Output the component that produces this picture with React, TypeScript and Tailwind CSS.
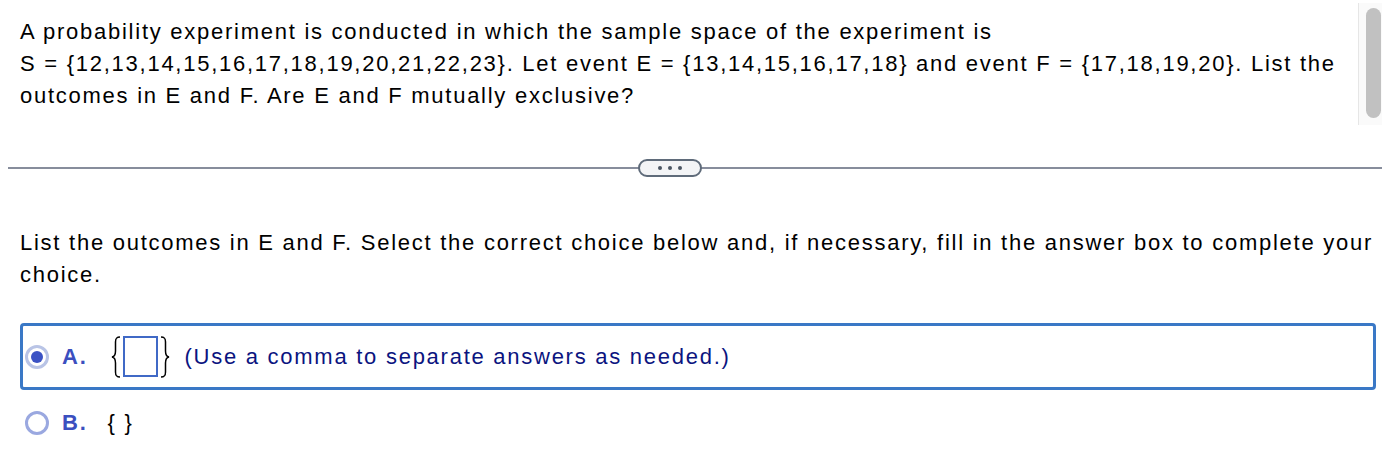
function Brace({ flip }: { flip?: boolean }) {
  return (
    <svg width="11" height="42" viewBox="0 0 11 42" className={flip ? "-scale-x-100" : ""}>
      <path
        d="M9 1 C5 1 4.5 3 4.5 6 L4.5 15 C4.5 19 3.5 20.5 1 21 C3.5 21.5 4.5 23 4.5 27 L4.5 36 C4.5 39 5 41 9 41"
        fill="none"
        stroke="#000"
        strokeWidth="1.5"
      />
    </svg>
  );
}

const line2 =
  "S = {12,13,14,15,16,17,18,19,20,21,22,23}. Let event E = {13,14,15,16,17,18} and event F = {17,18,19,20}. List the outcomes in E and F. Are E and F mutually exclusive?";

export default function App() {
  return (
    <div className="relative h-[458px] w-[1382px] overflow-hidden bg-white font-['Liberation_Sans',Arial,sans-serif] tracking-[1.74px] text-black">
      <div className="absolute right-0 top-[3px] flex h-[122px] w-[24px] justify-end border-l border-[#e6e6e6] bg-[#fafafa] pr-[1px] pt-[5px]">
        <div className="h-[110px] w-[15px] rounded-full bg-[#c1c1c1]" />
      </div>

      <div className="pl-[20px] pr-[24px] pt-[16px] text-[22px] leading-[32px]">
        <p>A probability experiment is conducted in which the sample space of the experiment is</p>
        <p>{line2}</p>
      </div>

      <div className="relative ml-[8px] mt-[47px] flex h-[18px] items-center">
        <div className="h-[2px] w-full bg-[#878d9c]" />
        <div className="absolute left-[630px] top-0 flex h-[18px] w-[64px] items-center justify-center gap-[6px] rounded-full border-2 border-[#5f6b7a] bg-[#f3f4f6]">
          <span className="h-[4px] w-[4px] rounded-full bg-[#4b5563]" />
          <span className="h-[4px] w-[4px] rounded-full bg-[#4b5563]" />
          <span className="h-[4px] w-[4px] rounded-full bg-[#4b5563]" />
        </div>
      </div>

      <div className="pl-[20px] pr-[2px] pt-[50px] text-[22px] leading-[32px]">
        <p>List the outcomes in E and F. Select the correct choice below and, if necessary, fill in the answer box to complete your choice.</p>
      </div>

      <div className="ml-[20px] mr-[6px] mt-[32px] flex h-[67px] items-center rounded-[4px] border-[3px] border-[#3a78c6] pl-[2px]">
        <span className="flex h-[24px] w-[24px] items-center justify-center rounded-full border-[3px] border-[#b9c4e6] bg-white">
          <span className="h-[12px] w-[12px] rounded-full bg-[#3b52c4]" />
        </span>
        <span className="ml-[13px] text-[22px] font-bold text-[#3b4fbf]">A.</span>
        <span className="ml-[24px] flex items-center gap-[1px]">
          <Brace />
          <span className="h-[41px] w-[35px] border-2 border-[#4069c6] bg-white" />
          <Brace flip />
        </span>
        <span className="ml-[14px] text-[22px] text-[#0b1480]">(Use a comma to separate answers as needed.)</span>
      </div>

      <div className="ml-[25px] mt-[16px] flex items-center">
        <span className="h-[24px] w-[24px] rounded-full border-[3px] border-[#9aa8e0] bg-white" />
        <span className="ml-[13px] text-[22px] font-bold text-[#3b4fbf]">B.</span>
        <span className="ml-[20px] text-[22px] text-black">{"{ }"}</span>
      </div>
    </div>
  );
}
